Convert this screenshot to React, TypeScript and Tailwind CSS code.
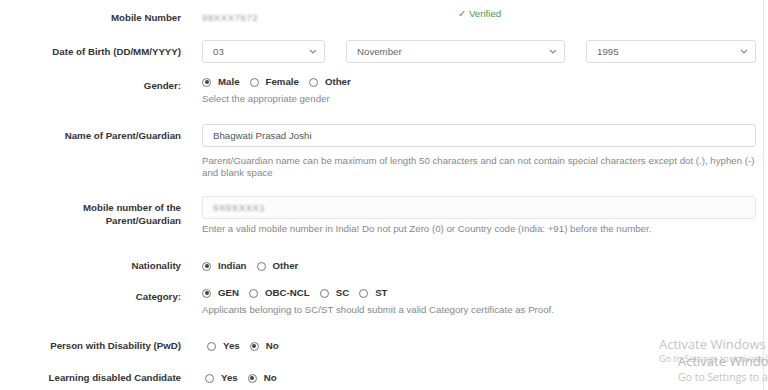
import React from 'react';

const Radio = ({ checked = false }: { checked?: boolean }) => (
  <span className="w-[9px] h-[9px] rounded-full border border-[#777] flex items-center justify-center bg-white shrink-0">
    {checked && <span className="w-[4px] h-[4px] rounded-full bg-[#444]" />}
  </span>
);

const RadioGroup = ({ options, selected, className = '' }: { options: string[]; selected: string; className?: string }) => (
  <div className={`flex items-center gap-[10px] h-[12px] ${className}`}>
    {options.map((opt) => (
      <label key={opt} className="flex items-center gap-[7px] font-bold text-[#333]">
        <Radio checked={opt === selected} />
        <span>{opt}</span>
      </label>
    ))}
  </div>
);

const Select = ({ value, width }: { value: string; width: string }) => (
  <div className={`${width} h-[23px] border border-[#dcdcdc] rounded-[3px] flex items-center justify-between pl-[10px] pr-[7px] text-[#666] bg-white`}>
    <span>{value}</span>
    <svg width="8" height="5" viewBox="0 0 8 5" fill="none" stroke="#888" strokeWidth="1.2">
      <path d="M1 1l3 3 3-3" />
    </svg>
  </div>
);

const Label = ({ children, className = '' }: { children: React.ReactNode; className?: string }) => (
  <div className={`w-[181px] shrink-0 text-right font-bold text-[#333] ${className}`}>{children}</div>
);

const Blurred = ({ text }: { text: string }) => (
  <span className="text-[#999] blur-[1.3px] tracking-[0.5px]">{text}</span>
);

export default function App() {
  return (
    <div className="relative w-[768px] h-[390px] overflow-hidden bg-white">
      <div
        className="w-[764px] h-[390px] border-r border-[#e4e4e4] text-[9.7px] leading-[12px]"
        style={{ fontFamily: '"Liberation Sans", Arial, sans-serif' }}
      >
        {/* Mobile number */}
        <div className="flex gap-[21px] pt-[12px]">
          <Label>Mobile Number</Label>
          <div className="flex items-start">
            <Blurred text="98XXX7672" />
            <div className="ml-[200px] -mt-[4px] text-[#3f9b5c]">✓ Verified</div>
          </div>
        </div>

        {/* DOB */}
        <div className="flex items-center gap-[21px] mt-[16px]">
          <Label>Date of Birth (DD/MM/YYYY)</Label>
          <div className="flex gap-[21px]">
            <Select value="03" width="w-[123px]" />
            <Select value="November" width="w-[219px]" />
            <Select value="1995" width="w-[170px]" />
          </div>
        </div>

        {/* Gender */}
        <div className="flex gap-[21px] mt-[13px]">
          <Label className="pt-[4px]">Gender:</Label>
          <div>
            <RadioGroup options={['Male', 'Female', 'Other']} selected="Male" />
            <p className="mt-[5px] text-[#888]">Select the appropriate gender</p>
          </div>
        </div>

        {/* Parent name */}
        <div className="flex gap-[21px] mt-[19px]">
          <Label className="pt-[6px]">Name of Parent/Guardian</Label>
          <div className="w-[554px]">
            <div className="h-[23px] border border-[#dcdcdc] rounded-[3px] flex items-center pl-[10px] text-[#555]">
              Bhagwati Prasad Joshi
            </div>
            <p className="mt-[8px] text-[#888] leading-[12px]">
              Parent/Guardian name can be maximum of length 50 characters and can not contain special characters except dot (.), hyphen (-)
              <br />
              and blank space
            </p>
          </div>
        </div>

        {/* Parent mobile */}
        <div className="flex gap-[21px] mt-[17px]">
          <Label className="pt-[5px] leading-[13px]">
            Mobile number of the
            <br />
            Parent/Guardian
          </Label>
          <div className="w-[554px]">
            <div className="h-[23px] border border-[#e6e6e6] rounded-[3px] flex items-center pl-[10px] bg-[#fcfcfc]">
              <Blurred text="9X9XXXX1" />
            </div>
            <p className="mt-[4px] text-[#888]">
              Enter a valid mobile number in India! Do not put Zero (0) or Country code (India: +91) before the number.
            </p>
          </div>
        </div>

        {/* Nationality */}
        <div className="flex gap-[21px] mt-[25px]">
          <Label>Nationality</Label>
          <RadioGroup options={['Indian', 'Other']} selected="Indian" />
        </div>

        {/* Category */}
        <div className="flex gap-[21px] mt-[15px]">
          <Label className="pt-[4px]">Category:</Label>
          <div>
            <RadioGroup options={['GEN', 'OBC-NCL', 'SC', 'ST']} selected="GEN" />
            <p className="mt-[5px] text-[#888]">Applicants belonging to SC/ST should submit a valid Category certificate as Proof.</p>
          </div>
        </div>

        {/* PwD */}
        <div className="flex gap-[21px] mt-[24px]">
          <Label>Person with Disability (PwD)</Label>
          <RadioGroup options={['Yes', 'No']} selected="No" className="ml-[5px]" />
        </div>

        {/* Learning disabled */}
        <div className="flex gap-[21px] mt-[20px]">
          <Label>Learning disabled Candidate</Label>
          <RadioGroup options={['Yes', 'No']} selected="No" className="ml-[3px]" />
        </div>
      </div>

      {/* Activate Windows watermark */}
      <div
        className="absolute left-[659px] top-[336px] text-[#c4c4c4] whitespace-nowrap pointer-events-none"
        style={{ fontFamily: '"Open Sans", "Noto Sans", sans-serif' }}
      >
        <div className="text-[13px] leading-[17px]">Activate Windows</div>
        <div className="text-[9px] leading-[11px]">Go to Settings to activate Windows.</div>
      </div>
      <div
        className="absolute left-[678px] top-[352px] text-[#b8b8b8] whitespace-nowrap pointer-events-none"
        style={{ fontFamily: '"Open Sans", "Noto Sans", sans-serif' }}
      >
        <div className="text-[13px] leading-[18px]">Activate Windows</div>
        <div className="text-[10.5px] leading-[14px] text-[#c4c4c4]">Go to Settings to activate Windows.</div>
      </div>
    </div>
  );
}
